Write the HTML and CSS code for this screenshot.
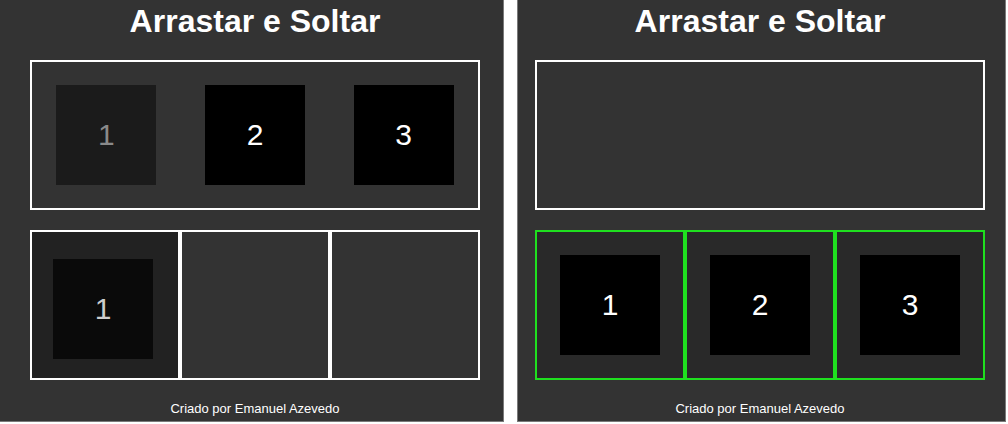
FILE: index.html
```html
<!DOCTYPE html>
<html lang="pt">
<head>
<meta charset="utf-8">
<title>Arrastar e Soltar</title>
<link rel="stylesheet" href="styles.css">
</head>
<body>
  <section class="panel panel-left">
    <div class="content">
      <h1 class="title">Arrastar e Soltar</h1>
      <div class="source">
        <div class="card card-ghost">1</div>
        <div class="card">2</div>
        <div class="card">3</div>
      </div>
      <div class="targets">
        <div class="slot slot-hover"><div class="card card-dragging">1</div></div>
        <div class="slot"></div>
        <div class="slot"></div>
      </div>
      <p class="footer">Criado por Emanuel Azevedo</p>
    </div>
  </section>
  <section class="panel panel-right">
    <div class="content">
      <h1 class="title">Arrastar e Soltar</h1>
      <div class="source"></div>
      <div class="targets">
        <div class="slot slot-done"><div class="card">1</div></div>
        <div class="slot slot-done"><div class="card">2</div></div>
        <div class="slot slot-done"><div class="card">3</div></div>
      </div>
      <p class="footer">Criado por Emanuel Azevedo</p>
    </div>
  </section>
</body>
</html>
```
FILE: styles.css
```css
* { box-sizing: border-box; }

html, body {
  margin: 0;
  background: #ffffff;
}

body {
  display: flex;
  align-items: flex-start;
  font-family: "Liberation Sans", Arial, sans-serif;
  color: #ffffff;
  height: 424px;
  overflow: hidden;
}

.panel {
  background: #333333;
  height: 422px;
  border-bottom: 1px solid #7a7a7a;
}

.panel-left {
  width: 504px;
  padding-left: 30px;
  border-right: 1px solid #7a7a7a;
}

.panel-right {
  width: 489px;
  margin-left: 13px;
  padding-left: 17px;
  border-left: 1px solid #7a7a7a;
  border-right: 1px solid #7a7a7a;
}

.content {
  width: 450px;
  display: flex;
  flex-direction: column;
}

.title {
  margin: 0;
  padding-top: 3px;
  font-size: 32px;
  line-height: 36px;
  font-weight: bold;
  text-align: center;
}

.source {
  margin-top: 21px;
  height: 150px;
  border: 2px solid #ffffff;
  display: flex;
  justify-content: space-around;
  align-items: center;
}

.targets {
  margin-top: 20px;
  display: flex;
}

.slot {
  width: 150px;
  height: 150px;
  border: 2px solid #ffffff;
  display: flex;
  align-items: center;
  justify-content: center;
}

.slot-hover {
  background: #222222;
}

.slot-done {
  background: #292929;
  border-color: #1fe01f;
}

.card {
  width: 100px;
  height: 100px;
  background: #000000;
  color: #ffffff;
  font-size: 30px;
  display: flex;
  align-items: center;
  justify-content: center;
}

.card-ghost {
  background: #1b1b1b;
  color: #8a8a8a;
}

.card-dragging {
  background: #0a0a0a;
  color: #cccccc;
  margin: 8px 4px 0 0;
}

.footer {
  margin: 21px 0 0;
  font-size: 13px;
  line-height: 15px;
  text-align: center;
}
```
